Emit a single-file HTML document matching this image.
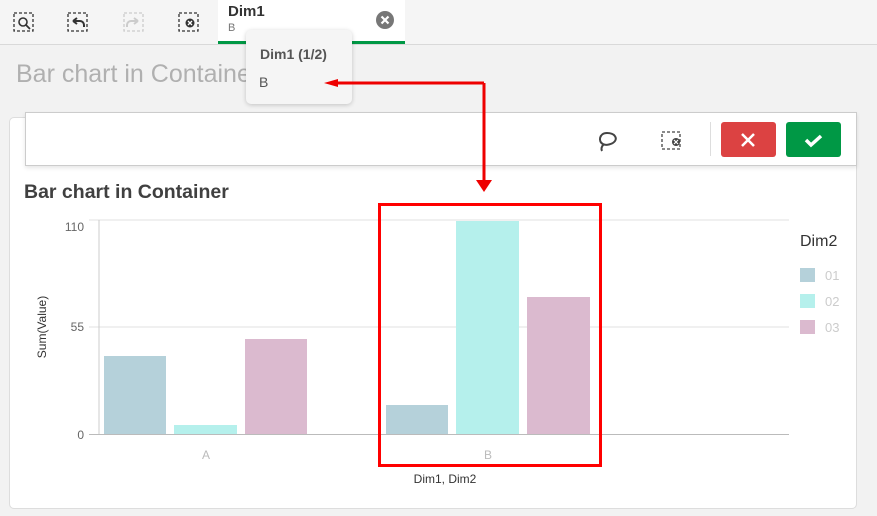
<!DOCTYPE html>
<html><head><style>
body{margin:0;width:877px;height:516px;background:#f2f2f2;font-family:"Liberation Sans",sans-serif;position:relative;overflow:hidden}
.a{position:absolute}
</style></head><body>
<div class="a" style="left:0;top:0;width:877px;height:44px;background:#f5f5f5;border-bottom:1px solid #d9d9d9"></div>
<svg class="a" style="left:10px;top:8px" width="200" height="28">
<g fill="none" stroke="#333" stroke-width="1.3" stroke-dasharray="3 2">
<rect x="4" y="5" width="19" height="18"/><rect x="58" y="5" width="19" height="18"/><rect x="169" y="5" width="19" height="18"/></g>
<rect x="114" y="5" width="19" height="18" fill="none" stroke="#ccc" stroke-width="1.3" stroke-dasharray="3 2"/>
<circle cx="13" cy="14" r="4" fill="none" stroke="#333" stroke-width="1.6"/><path d="M16 17l4 4" stroke="#333" stroke-width="1.8"/>
<path d="M63 13h7a4 4 0 0 1 4 4v2M63 13l4-3M63 13l4 3" fill="none" stroke="#333" stroke-width="2"/>
<path d="M128 13h-7a4 4 0 0 0-4 4v2M128 13l-4-3M128 13l-4 3" fill="none" stroke="#ccc" stroke-width="2"/>
<circle cx="180" cy="15" r="4.5" fill="#333"/><path d="M178 13l4 4M182 13l-4 4" stroke="#fff" stroke-width="1.3"/>
</svg>
<div class="a" style="left:218px;top:0;width:187px;height:41px;background:#fff;border-bottom:3px solid #009845"></div>
<div class="a" style="left:228px;top:3px;font-size:15px;font-weight:bold;color:#333">Dim1</div>
<div class="a" style="left:228px;top:22px;font-size:11px;color:#777">B</div>
<svg class="a" style="left:375px;top:10px" width="20" height="20"><circle cx="10" cy="10" r="9" fill="#777"/><path d="M6.5 6.5l7 7M13.5 6.5l-7 7" stroke="#fff" stroke-width="2.2"/></svg>
<div class="a" style="left:16px;top:60px;font-size:25px;color:#b0b0b0">Bar chart in Container</div>
<div class="a" style="left:9px;top:117px;width:846px;height:390px;background:#fff;border:1px solid #ddd;border-radius:5px"></div>
<div class="a" style="left:25px;top:112px;width:830px;height:52px;background:#fff;border:1px solid #ccc;box-shadow:0 2px 4px rgba(0,0,0,.1)"></div>
<svg class="a" style="left:590px;top:125px" width="100" height="30"><path d="M14 19c-3 3-3 5-2 7M13 19c-5-2-4-11 4-11s10 5 8 8-9 5-12 3" fill="none" stroke="#444" stroke-width="2"/>
<rect x="72" y="7" width="18" height="17" fill="none" stroke="#444" stroke-width="1.3" stroke-dasharray="3 2"/><circle cx="86" cy="17" r="4" fill="#444"/><path d="M84 15l4 4M88 15l-4 4" stroke="#fff" stroke-width="1.2"/></svg>
<div class="a" style="left:710px;top:122px;width:1px;height:34px;background:#ddd"></div>
<div class="a" style="left:721px;top:122px;width:55px;height:35px;background:#dc4242;border-radius:3px"></div>
<svg class="a" style="left:738px;top:131px" width="20" height="18"><path d="M4 3l12 12M16 3l-12 12" stroke="#fff" stroke-width="2.5"/></svg>
<div class="a" style="left:786px;top:122px;width:55px;height:35px;background:#009845;border-radius:3px"></div>
<svg class="a" style="left:803px;top:131px" width="22" height="18"><path d="M3 9l5 5 10-9" fill="none" stroke="#fff" stroke-width="3.5"/></svg>
<div class="a" style="left:24px;top:181px;font-size:19.5px;font-weight:bold;color:#404040">Bar chart in Container</div>
<svg class="a" style="left:0;top:0" width="877" height="516" font-family="Liberation Sans, sans-serif">
<g stroke="#e0e0e0"><line x1="89" y1="220" x2="789" y2="220"/><line x1="89" y1="327" x2="789" y2="327"/></g>
<line x1="99" y1="220" x2="99" y2="434" stroke="#ccc"/>
<line x1="89" y1="434.5" x2="789" y2="434.5" stroke="#bbb"/>
<g font-size="12" fill="#666" text-anchor="end"><text x="84" y="231">110</text><text x="84" y="331">55</text><text x="84" y="439">0</text></g>
<text transform="translate(46 327) rotate(-90)" font-size="12" fill="#333" text-anchor="middle">Sum(Value)</text>
<rect x="104" y="356" width="62" height="78" fill="#b5d1da"/>
<rect x="174" y="425" width="63" height="9" fill="#b5f0ec"/>
<rect x="245" y="339" width="62" height="95" fill="#dbbacf"/>
<rect x="386" y="405" width="62" height="29" fill="#b5d1da"/>
<rect x="456" y="221" width="63" height="213" fill="#b5f0ec"/>
<rect x="527" y="297" width="63" height="137" fill="#dbbacf"/>
<g font-size="12" fill="#bbb" text-anchor="middle"><text x="206" y="459">A</text><text x="488" y="459">B</text></g>
<text x="445" y="483" font-size="12" fill="#333" text-anchor="middle">Dim1, Dim2</text>
<text x="800" y="246" font-size="16" fill="#333">Dim2</text>
<rect x="800" y="268" width="15" height="14" fill="#b5d1da"/><rect x="800" y="294" width="15" height="14" fill="#b5f0ec"/><rect x="800" y="320" width="15" height="14" fill="#dbbacf"/>
<g font-size="13" fill="#ccc"><text x="825" y="280">01</text><text x="825" y="306">02</text><text x="825" y="332">03</text></g>
<rect x="379.5" y="204.5" width="221" height="261" fill="none" stroke="#f00" stroke-width="3"/>
<path d="M484 83V182M484 83H345" fill="none" stroke="#e00" stroke-width="3"/>
<path d="M476 180l8 12 8-12z" fill="#e00"/>
</svg>
<div class="a" style="left:246px;top:30px;width:106px;height:74px;background:#f5f5f5;border-radius:5px;box-shadow:0 1px 5px rgba(0,0,0,.2)"></div>
<div class="a" style="left:260px;top:46px;font-size:14px;font-weight:bold;color:#555">Dim1 (1/2)</div>
<div class="a" style="left:259px;top:74px;font-size:14px;color:#555">B</div>
<svg class="a" style="left:320px;top:74px" width="40" height="18"><path d="M38 9H12" stroke="#e00" stroke-width="3"/><path d="M4 9l14-4v8z" fill="#e00"/></svg>
</body></html>
